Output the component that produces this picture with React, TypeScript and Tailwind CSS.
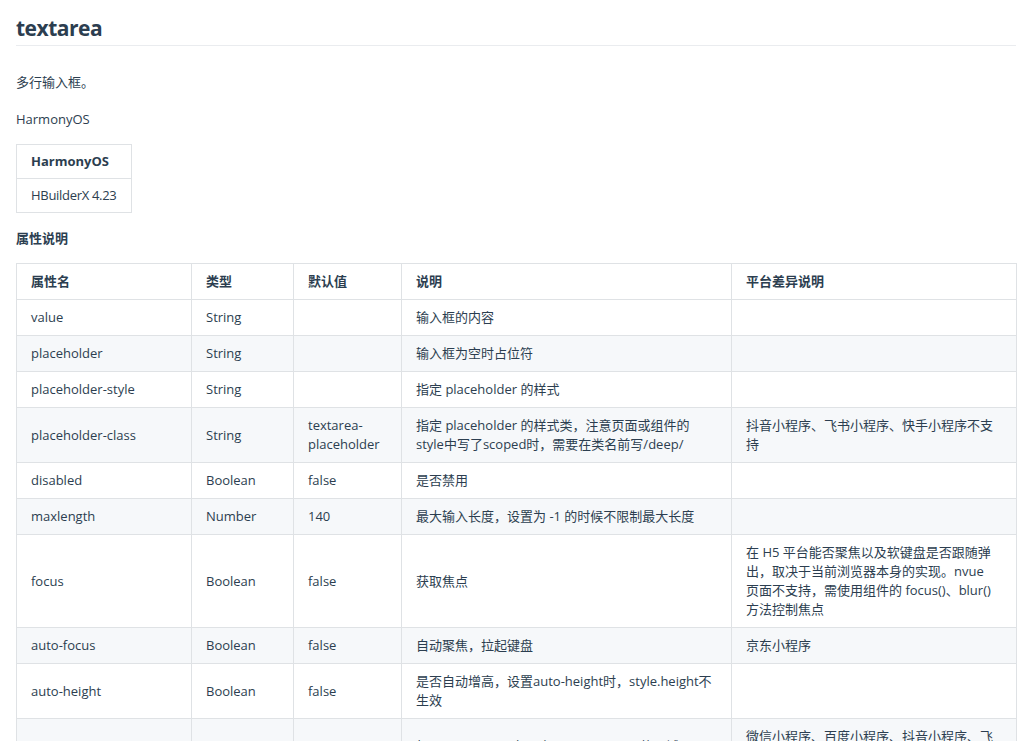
import React from "react";

const rows: { c: string[]; }[] = [
  { c: ["value", "String", "", "输入框的内容", ""] },
  { c: ["placeholder", "String", "", "输入框为空时占位符", ""] },
  { c: ["placeholder-style", "String", "", "指定 placeholder 的样式", ""] },
  {
    c: [
      "placeholder-class",
      "String",
      "textarea-placeholder",
      "指定 placeholder 的样式类，注意页面或组件的style中写了scoped时，需要在类名前写/deep/",
      "抖音小程序、飞书小程序、快手小程序不支持",
    ],
  },
  { c: ["disabled", "Boolean", "false", "是否禁用", ""] },
  { c: ["maxlength", "Number", "140", "最大输入长度，设置为 -1 的时候不限制最大长度", ""] },
  {
    c: [
      "focus",
      "Boolean",
      "false",
      "获取焦点",
      "在 H5 平台能否聚焦以及软键盘是否跟随弹出，取决于当前浏览器本身的实现。nvue 页面不支持，需使用组件的 focus()、blur() 方法控制焦点",
    ],
  },
  { c: ["auto-focus", "Boolean", "false", "自动聚焦，拉起键盘", "京东小程序"] },
  {
    c: [
      "auto-height",
      "Boolean",
      "false",
      "是否自动增高，设置auto-height时，style.height不生效",
      "",
    ],
  },
  {
    c: [
      "fixed",
      "Boolean",
      "false",
      "如果 textarea 是在一个 position:fixed 的区域，需要显示指定属性 fixed 为 true",
      "微信小程序、百度小程序、抖音小程序、飞书小程序、QQ小程序、快手小程序、京东小程序",
    ],
  },
  {
    c: [
      "cursor-spacing",
      "Number",
      "0",
      "指定光标与键盘的距离，单位 px 。取 textarea 距离底部的距离和 cursor-spacing 指定的距离的最小值作为光标与键盘的距离",
      "App、微信小程序、百度小程序、抖音小程序、飞书小程序、QQ小程序、京东小程序",
    ],
  },
];

const headers = ["属性名", "类型", "默认值", "说明", "平台差异说明"];

export default function App() {
  return (
    <div
      className="bg-white text-[#2c3e50] pl-[16px] pr-[1px] text-[13px] leading-[19px] min-h-[741px]"
      style={{ fontFamily: '"Open Sans", "Noto Sans CJK SC", sans-serif' }}
    >
      <h1 className="pt-[12px] text-[21px] font-bold leading-[32px] pb-[1px] border-b border-[#eaecef] tracking-[-0.5px]">
        textarea
      </h1>
      <p className="mt-[26px] leading-[20px]">多行输入框。</p>
      <p className="mt-[17px] leading-[20px]">HarmonyOS</p>
      <table className="mt-[15px] border-collapse">
        <thead>
          <tr>
            <th className="border border-[#dfe2e5] px-[14px] py-[7px] text-left font-bold leading-[19px] whitespace-nowrap w-[114px]">
              HarmonyOS
            </th>
          </tr>
        </thead>
        <tbody>
          <tr>
            <td className="border border-[#dfe2e5] px-[14px] py-[7px] leading-[19px] whitespace-nowrap tracking-[-0.3px]">
              HBuilderX 4.23
            </td>
          </tr>
        </tbody>
      </table>
      <p className="mt-[15px] font-bold leading-[20px]">属性说明</p>
      <table className="mt-[15px] border-collapse table-fixed w-[1000px]">
        <colgroup>
          <col className="w-[175px]" />
          <col className="w-[102px]" />
          <col className="w-[108px]" />
          <col className="w-[330px]" />
          <col className="w-[285px]" />
        </colgroup>
        <thead>
          <tr>
            {headers.map((h) => (
              <th
                key={h}
                className="border border-[#dfe2e5] px-[14px] py-[8px] text-left font-bold"
              >
                {h}
              </th>
            ))}
          </tr>
        </thead>
        <tbody>
          {rows.map((r, i) => (
            <tr key={i} className={i % 2 === 1 ? "bg-[#f6f8fa]" : "bg-white"}>
              {r.c.map((v, j) => (
                <td
                  key={j}
                  className={
                    j === 4
                      ? "border border-[#dfe2e5] pl-[14px] pr-[17px] py-[8px] align-middle break-words"
                      : "border border-[#dfe2e5] px-[14px] py-[8px] align-middle break-words"
                  }
                >
                  {v}
                </td>
              ))}
            </tr>
          ))}
        </tbody>
      </table>
    </div>
  );
}
